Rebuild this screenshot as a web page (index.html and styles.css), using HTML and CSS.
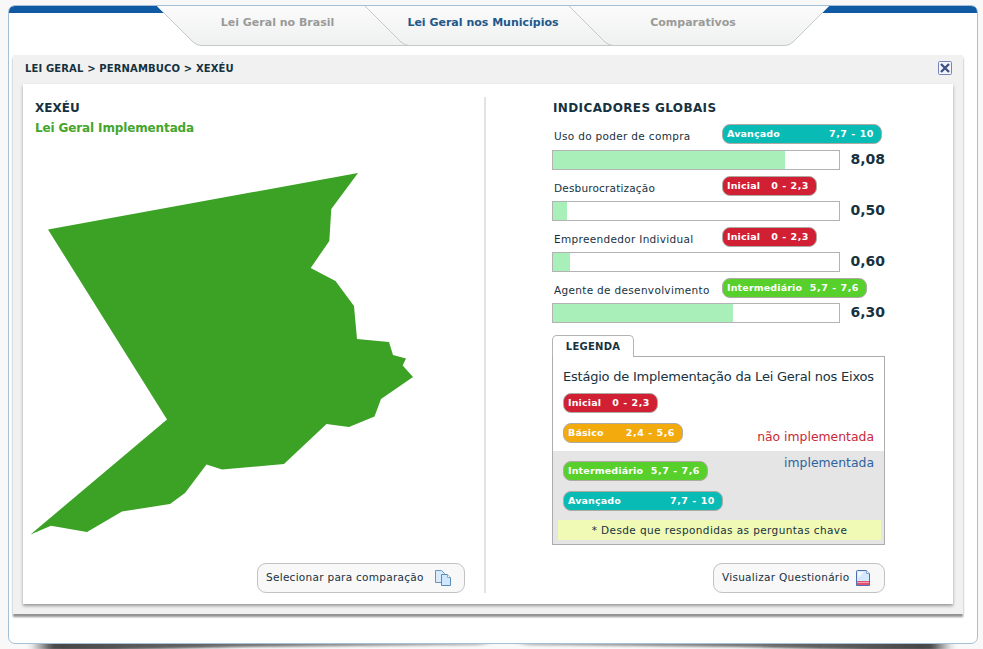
FILE: index.html
```
<!DOCTYPE html>
<html lang="pt-BR">
<head>
  <meta charset="utf-8">
  <title>Lei Geral nos Municípios</title>
  <link rel="stylesheet" href="styles.css">
</head>
<body>
  <div class="frame">
    <nav class="tabs">
      <svg class="tabs-bg" width="970" height="41" viewBox="8 5 970 41">
        <defs>
          <linearGradient id="tab-fill" x1="0" y1="0" x2="0" y2="1">
            <stop offset="0" stop-color="#fbfbfb"/>
            <stop offset="1" stop-color="#eff0f0"/>
          </linearGradient>
        </defs>
        <path d="M9 13V12Q9 6 15 6H157L164 13Z" fill="#0f5aa2"/>
        <path d="M829 6H971Q977 6 977 12V13H822Z" fill="#0f5aa2"/>
        <path d="M157 6L193 42Q197 45.500 201 45.500H785Q789 45.500 793 42L829 6Z" fill="url(#tab-fill)"/>
        <path d="M163 12L193 42Q197 45.500 201 45.500H785Q789 45.500 793 42L822 13M365 6L401 42Q405 45.500 409 45.500M569 6L605 42Q609 45.500 613 45.500" fill="none" stroke="#c6c9c9"/>
        <path d="M14 5.500H972" stroke="#a3c0d6"/>
      </svg>
      <a class="tab tab-brasil">Lei Geral no Brasil</a>
      <a class="tab tab-municipios active">Lei Geral nos Municípios</a>
      <a class="tab tab-comparativos">Comparativos</a>
    </nav>

    <div class="panel">
      <div class="panel-head">
        <span class="breadcrumb">LEI GERAL &gt; PERNAMBUCO &gt; XEXÉU</span>
        <svg class="close" width="14" height="14" viewBox="0 0 14 14">
          <rect x=".5" y=".5" width="13" height="13" rx="1" fill="#f3f4fb" stroke="#7884bd"/>
          <path d="M3 3L11 11M11 3L3 11" stroke="#3f5080" stroke-width="2.300"/>
        </svg>
      </div>

      <div class="content">
        <section class="city">
          <h2>XEXÉU</h2>
          <p class="status">Lei Geral Implementada</p>
          <svg class="map" width="390" height="370" viewBox="27 170 390 370">
            <polygon fill="#3ba226" points="48,229.500 358,173 331.300,209 329.300,241 310.700,268 335.500,281 354,306 357,339 389,342 393,355 406,358.500 402.700,365.500 413,377 381,399 374.500,416.500 349,427 326.500,424 284,464 222,469.500 206.500,464.500 185,493 170,504 122,511.500 87,532 51,525.700 30.500,534.500 167,419.500"/>
          </svg>
          <a class="button button-compare">
            <span>Selecionar para comparação</span>
            <svg width="16" height="16" viewBox="0 0 16 16">
              <path d="M.5 .5H6.500L9.500 3.500V12.500H.5Z" fill="#d9eafa" stroke="#6795bd"/>
              <path d="M6.500 4.500H12.500L15.500 7.500V15.500H6.500Z" fill="#cfe7ff" stroke="#5c8cb9"/>
              <path d="M12.500 4.500V7.500H15.500" fill="#fff" stroke="#7eaad0"/>
            </svg>
          </a>
        </section>

        <section class="indicators">
          <h2>INDICADORES GLOBAIS</h2>

          <div class="indicator">
            <div class="indicator-head">
              <span class="name n1">Uso do poder de compra</span>
              <span class="pill avancado"><b>Avançado</b><b>7,7 - 10</b></span>
            </div>
            <div class="indicator-row">
              <div class="bar"><div class="fill" style="width: 81%"></div></div>
              <span class="value">8,08</span>
            </div>
          </div>

          <div class="indicator">
            <div class="indicator-head">
              <span class="name n2">Desburocratização</span>
              <span class="pill inicial"><b>Inicial</b><b>0 - 2,3</b></span>
            </div>
            <div class="indicator-row">
              <div class="bar"><div class="fill" style="width: 5%"></div></div>
              <span class="value">0,50</span>
            </div>
          </div>

          <div class="indicator">
            <div class="indicator-head">
              <span class="name n3">Empreendedor Individual</span>
              <span class="pill inicial"><b>Inicial</b><b>0 - 2,3</b></span>
            </div>
            <div class="indicator-row">
              <div class="bar"><div class="fill" style="width: 6%"></div></div>
              <span class="value">0,60</span>
            </div>
          </div>

          <div class="indicator">
            <div class="indicator-head">
              <span class="name n4">Agente de desenvolvimento</span>
              <span class="pill intermediario"><b>Intermediário</b><b>5,7 - 7,6</b></span>
            </div>
            <div class="indicator-row">
              <div class="bar"><div class="fill" style="width: 63%"></div></div>
              <span class="value">6,30</span>
            </div>
          </div>

          <div class="legend">
            <div class="legend-tab">LEGENDA</div>
            <div class="legend-box">
              <div class="legend-top">
                <p class="legend-title">Estágio de Implementação da Lei Geral nos Eixos</p>
                <span class="pill inicial"><b>Inicial</b><b>0 - 2,3</b></span>
                <div class="legend-line">
                  <span class="pill basico"><b>Básico</b><b>2,4 - 5,6</b></span>
                  <span class="not-done">não implementada</span>
                </div>
              </div>
              <div class="legend-bottom">
                <div class="legend-line">
                  <span class="pill intermediario"><b>Intermediário</b><b>5,7 - 7,6</b></span>
                  <span class="done">implementada</span>
                </div>
                <span class="pill avancado"><b>Avançado</b><b>7,7 - 10</b></span>
                <p class="note">* Desde que respondidas as perguntas chave</p>
              </div>
            </div>
          </div>

          <a class="button button-view">
            <span>Visualizar Questionário</span>
            <svg width="14" height="16" viewBox="0 0 14 16">
              <path d="M.5 1.500Q.5 .5 1.500 .5H10.500L13.500 3.500V15.500H.5Z" fill="#d3e9ff" stroke="#4f6fb0"/>
              <path d="M2 8L8 2H2Z" fill="#f1f8ff"/>
              <path d="M10.500 .5V3.500H13.500" fill="#fff" stroke="#86a6d4"/>
              <path d="M1 11H13V15H1Z" fill="#e0526f"/>
              <path d="M1 12.500H13" stroke="#f1a2b2"/>
            </svg>
          </a>
        </section>
      </div>
    </div>
  </div>

  <svg class="frame-shadow" width="983" height="5" viewBox="0 0 983 5">
    <defs>
      <linearGradient id="shadow-left">
        <stop offset="0" stop-color="#333" stop-opacity="0"/>
        <stop offset=".05" stop-color="#333" stop-opacity=".9"/>
        <stop offset=".35" stop-color="#333" stop-opacity=".75"/>
        <stop offset="1" stop-color="#333" stop-opacity=".3"/>
      </linearGradient>
      <linearGradient id="shadow-right">
        <stop offset="0" stop-color="#333" stop-opacity=".3"/>
        <stop offset=".65" stop-color="#333" stop-opacity=".75"/>
        <stop offset=".95" stop-color="#333" stop-opacity=".9"/>
        <stop offset="1" stop-color="#333" stop-opacity="0"/>
      </linearGradient>
      <filter id="soft" x="-5%" y="-100%" width="110%" height="300%"><feGaussianBlur stdDeviation="3 1"/></filter>
    </defs>
    <path d="M30 -2H492L480 1.200L250 3L110 6H30Z" fill="url(#shadow-left)" filter="url(#soft)"/>
    <path d="M953 -2H515L527 1.200L735 3L870 6H953Z" fill="url(#shadow-right)" filter="url(#soft)"/>
  </svg>
</body>
</html>
```
FILE: styles.css
```
* {
  box-sizing: border-box;
}

body {
  margin: 0;
  height: 649px;
  padding-top: 5px;
  overflow: hidden;
  background-color: #f8f8f8;
  color: #17323f;
  font-family: Verdana, 'DejaVu Sans', sans-serif;
  font-size: 11px;
}

h2, p {
  margin: 0;
}

.frame {
  width: 970px;
  height: 639px;
  margin-left: 8px;
  border: 1px solid #a3c0d6;
  border-radius: 7px;
  background-color: #fff;
}

/* Tabs */
.tabs {
  position: relative;
  display: flex;
  height: 49px;
  padding-left: 166px;
}

.tabs-bg {
  position: absolute;
  top: -1px;
  left: -1px;
}

.tab {
  position: relative;
  height: 34px;
  line-height: 34px;
  text-align: center;
  white-space: nowrap;
  font-weight: bold;
  color: #9a9a98;
}

.tab-brasil {
  width: 205px;
}

.tab-municipios {
  width: 206px;
}

.tab-comparativos {
  width: 214px;
}

.tab.active {
  color: #20588c;
}

/* Panel */
.panel {
  width: 950px;
  height: 559px;
  margin-left: 4px;
  padding: 0 10px;
  background-color: #f1f1f1;
  box-shadow: 0 3px 2px #919191;
}

.panel-head {
  display: flex;
  align-items: center;
  justify-content: space-between;
  height: 29px;
  padding: 0 1px 3px 2px;
}

.breadcrumb {
  font-size: 10px;
  font-weight: bold;
  letter-spacing: 0.14px;
}

.content {
  display: flex;
  height: 520px;
  background-color: #fff;
  box-shadow: 0 2px 3px #999;
}

h2 {
  font-size: 12px;
  line-height: 20px;
}

.city {
  display: flex;
  flex-direction: column;
  width: 463px;
  height: 496px;
  margin-top: 13px;
  border-right: 2px solid #e3e3e3;
}

.city h2 {
  padding: 1px 0 0 12px;
}

.status {
  padding-left: 12px;
  font-size: 12px;
  font-weight: bold;
  line-height: 20px;
  letter-spacing: -0.13px;
  color: #45a52d;
}

.map {
  margin: 32px 0 23px 4px;
}

.button {
  display: flex;
  align-items: center;
  height: 30px;
  padding-left: 8px;
  border: 1px solid #c2c2c2;
  border-radius: 9px;
  background-color: #f8f8f8;
  font-size: 10.5px;
  letter-spacing: 0.28px;
  white-space: nowrap;
}

.button span {
  padding-bottom: 2px;
}

.button-compare {
  width: 208px;
  margin-left: 234px;
}

.button-compare svg {
  margin-left: auto;
  margin-right: 13px;
}

.button-view {
  width: 172px;
  margin: 18px 0 0 161px;
}

.button-view svg {
  margin-left: auto;
  margin-right: 14px;
}

/* Indicators */
.indicators {
  width: 333px;
  margin: 13px 0 0 66px;
}

.indicators h2 {
  padding: 1px 0 0 1px;
  margin-bottom: 6px;
  letter-spacing: 0.38px;
}

.indicator {
  margin-bottom: 6px;
}

.indicator-head {
  display: flex;
  height: 25px;
}

.indicator:nth-of-type(1) .indicator-head {
  height: 26px;
}

.name {
  width: 170px;
  padding-left: 2px;
  font-size: 10.5px;
  line-height: 24px;
  letter-spacing: 0.32px;
  white-space: nowrap;
}

.n2 {
  letter-spacing: 0.18px;
}

.indicator-row {
  display: flex;
  align-items: center;
  justify-content: space-between;
  height: 20px;
}

.bar {
  width: 288px;
  height: 20px;
  border: 1px solid #b3b3b3;
}

.fill {
  height: 18px;
  background-color: #a9efb9;
}

.value {
  padding-bottom: 2px;
  font-size: 14px;
  font-weight: bold;
}

.pill {
  display: flex;
  justify-content: space-between;
  height: 20px;
  padding: 0 7px 0 4px;
  border: 1px solid #b0aaa5;
  border-radius: 8px;
  color: #fff;
  font-size: 9.5px;
  line-height: 17px;
  letter-spacing: 0.15px;
  white-space: nowrap;
}

.pill b:last-child {
  letter-spacing: 0.55px;
}

.inicial {
  width: 95px;
  background-color: #d12033;
}

.basico {
  width: 120px;
  background-color: #f2aa0c;
}

.intermediario {
  width: 145px;
  background-color: #58d02b;
}

.avancado {
  width: 160px;
  background-color: #09bbb5;
}

/* Legend */
.legend {
  margin-top: 12px;
}

.legend-tab {
  position: relative;
  width: 82px;
  height: 22px;
  margin-bottom: -1px;
  border: 1px solid #b3b3b3;
  border-bottom: none;
  border-radius: 5px 5px 0 0;
  background-color: #fff;
  text-align: center;
  font-size: 10px;
  font-weight: bold;
  line-height: 22px;
  letter-spacing: 0.25px;
}

.legend-box {
  height: 189px;
  border: 1px solid #a9adb0;
}

.legend-top {
  height: 94px;
  padding: 10px 10px 0;
}

.legend-title {
  margin-bottom: 6px;
  font-size: 13px;
  line-height: 20px;
  letter-spacing: -0.22px;
  white-space: nowrap;
}

.legend-top .legend-line {
  margin-top: 10px;
}

.legend-line {
  display: flex;
  justify-content: space-between;
}

.not-done, .done {
  font-size: 12.4px;
  line-height: 20px;
}

.not-done {
  height: 16px;
  margin-top: 4px;
  color: #c8283a;
}

.done {
  margin-top: -8px;
  color: #2c63a0;
}

.legend-bottom {
  height: 93px;
  padding: 10px 10px 0;
  background-color: #e5e5e5;
}

.legend-bottom .avancado {
  margin-top: 10px;
}

.note {
  height: 20px;
  margin: 9px -7px 0 -5px;
  background-color: #f1fab5;
  text-align: center;
  font-size: 10.5px;
  line-height: 21px;
  letter-spacing: 0.4px;
}

/* Shadow below the frame */
.frame-shadow {
  display: block;
  overflow: hidden;
}
```
